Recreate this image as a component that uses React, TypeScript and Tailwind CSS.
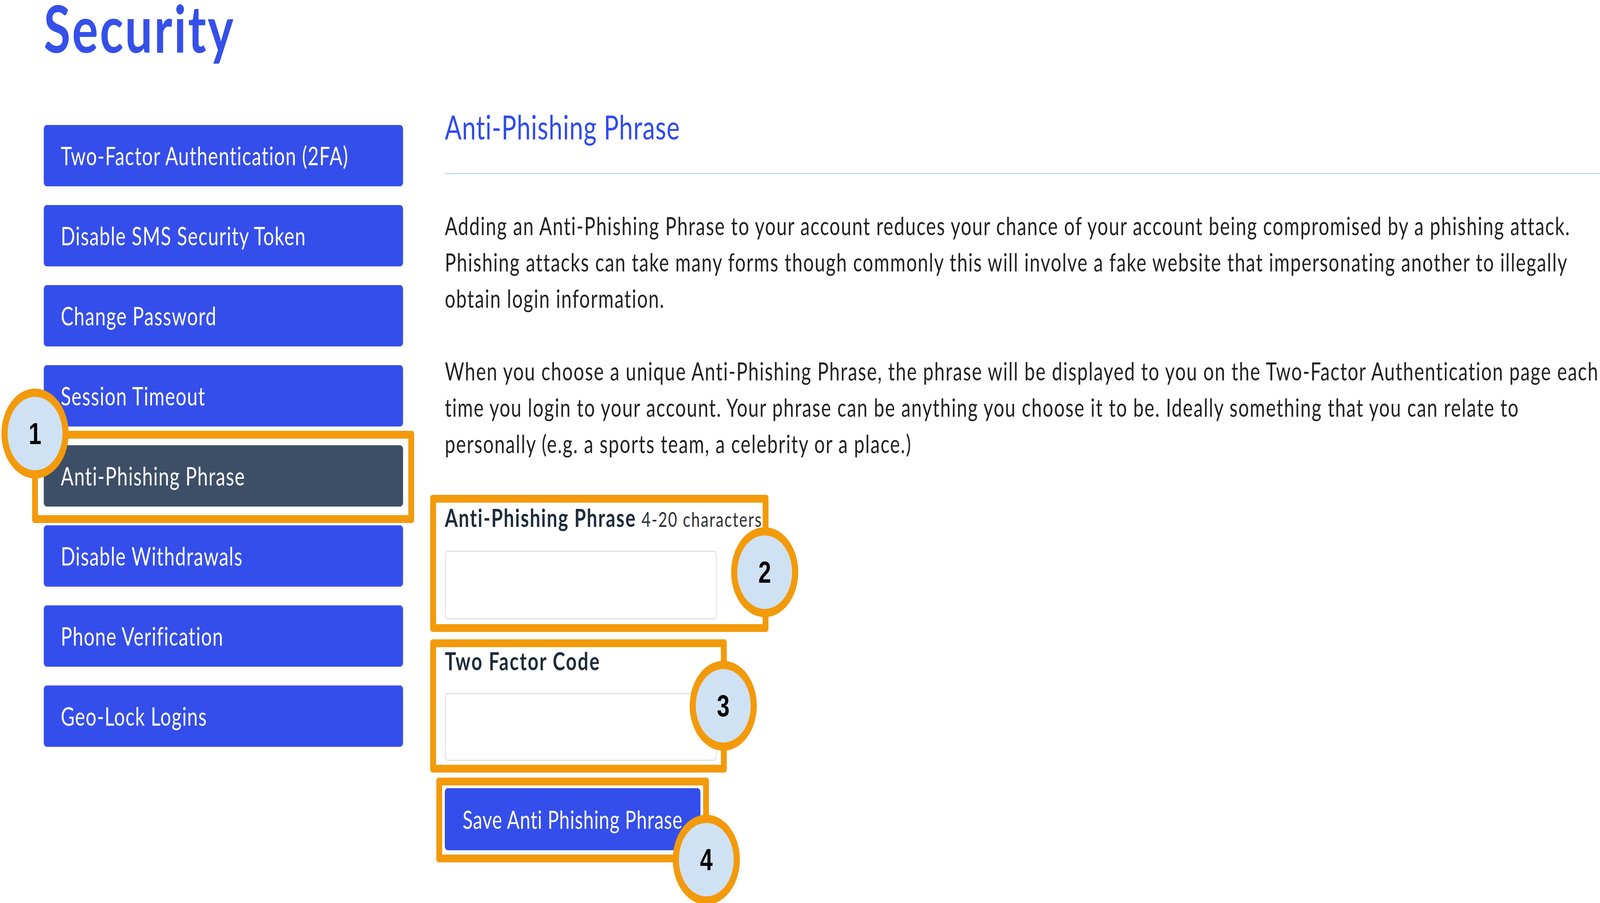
import React, { useEffect, useState } from 'react';

const navItems = [
  'Two-Factor Authentication (2FA)',
  'Disable SMS Security Token',
  'Change Password',
  'Session Timeout',
  'Anti-Phishing Phrase',
  'Disable Withdrawals',
  'Phone Verification',
  'Geo-Lock Logins',
];

const PAGE_W = 5482;

// numbered callout used by the annotation layer
function Marker({ n, className }: { n: number; className: string }) {
  return (
    <div
      className={`absolute z-20 flex h-[230px] w-[230px] items-center justify-center rounded-full border-[21px] border-[#f39a0b] bg-[#cfe2f3] font-['Liberation_Sans',Arial,sans-serif] text-[78px] font-bold text-black ${className}`}
    >
      {n}
    </div>
  );
}

export default function App() {
  const active = 'Anti-Phishing Phrase';
  // the frame is laid out at 5482px; fit it to the window width if that is narrower
  const [sx, setSx] = useState(() => Math.min(1, window.innerWidth / PAGE_W));

  useEffect(() => {
    const onResize = () => setSx(Math.min(1, window.innerWidth / PAGE_W));
    window.addEventListener('resize', onResize);
    return () => window.removeEventListener('resize', onResize);
  }, []);

  return (
    <div className="h-[2312px] w-full overflow-hidden bg-white">
      <div
        className="relative h-[2312px] w-[5482px] origin-top-left overflow-hidden bg-white font-['Lato',sans-serif]"
        style={{ transform: `scaleX(${sx})` }}
      >
        <h1 className="ml-[150px] text-[167px] leading-[142px] font-bold tracking-[0.034em] text-[#3550e8]">Security</h1>

        <div className="mt-[132px] flex">
          {/* Left nav */}
          <div className="ml-[150px] flex w-[1231px] shrink-0 flex-col gap-[48px] pt-[46px]">
            {navItems.map((item) => (
              <div key={item} className="relative">
                <button
                  className={`flex h-[157px] w-full items-center rounded-[10px] pl-[58px] text-left text-[65px] tracking-[0.03em] text-white ${
                    item === active ? 'bg-[#3d4f67]' : 'bg-[#344eeb]'
                  }`}
                >
                  {item}
                </button>
                {item === active && (
                  <>
                    <div className="pointer-events-none absolute -top-[37px] -bottom-[42px] -left-[40px] -right-[38px] rounded-[8px] border-[20px] border-[#f39a0b]" />
                    <Marker n={1} className="-left-[145px] -top-[145px]" />
                  </>
                )}
              </div>
            ))}
          </div>

          {/* Content */}
          <div className="ml-[143px] min-w-0 flex-1">
            <div className="border-b-[3px] border-[#c6dcf7] pb-[69px]">
              <h2 className="text-[85px] leading-[100px] tracking-[0.018em] text-[#2f4af0]">Anti-Phishing Phrase</h2>
            </div>

            <div className="mt-[85px] whitespace-nowrap text-[64px] leading-[93px] tracking-[0.042em] text-[#222222]">
              <p>
                Adding an Anti-Phishing Phrase to your account reduces your chance of your account being compromised by a phishing attack.
                <br />
                Phishing attacks can take many forms though commonly this will involve a fake website that impersonating another to illegally
                <br />
                obtain login information.
              </p>
              <p className="mt-[93px]">
                When you choose a unique Anti-Phishing Phrase, the phrase will be displayed to you on the Two-Factor Authentication page each
                <br />
                time you login to your account. Your phrase can be anything you choose it to be. Ideally something that you can relate to
                <br />
                personally (e.g. a sports team, a celebrity or a place.)
              </p>
            </div>

            {/* Phrase field */}
            <div className="relative mt-[103px] w-[932px]">
              <label className="block whitespace-nowrap text-[64px] leading-[80px] font-bold tracking-[0.047em] text-[#1e2b3a]">
                Anti-Phishing Phrase{' '}
                <span className="text-[53px] font-normal tracking-[0.06em] text-[#2b2f33]">4-20 characters</span>
              </label>
              <input className="mt-[41px] block h-[176px] w-[932px] rounded-[10px] border-[3px] border-[#dde2e8] bg-white" />
              <div className="pointer-events-none absolute -top-[18px] -bottom-[32px] -left-[50px] w-[1159px] rounded-[8px] border-[20px] border-[#f39a0b]" />
              <Marker n={2} className="left-[981px] top-[65px]" />
            </div>

            {/* Two factor field */}
            <div className="relative mt-[66px] w-[932px]">
              <label className="block text-[64px] leading-[80px] font-bold tracking-[0.057em] text-[#1e2b3a]">Two Factor Code</label>
              <input className="mt-[42px] block h-[174px] w-[932px] rounded-[10px] border-[3px] border-[#dde2e8] bg-white" />
              <div className="pointer-events-none absolute -top-[15px] -bottom-[30px] -left-[50px] w-[1016px] rounded-[8px] border-[20px] border-[#f39a0b]" />
              <Marker n={3} className="left-[839px] top-[40px]" />
            </div>

            {/* Save */}
            <div className="relative mt-[70px] w-[876px]">
              <button className="h-[159px] w-[876px] rounded-[10px] bg-[#344eeb] text-[64px] tracking-[0.02em] text-white">
                Save Anti Phishing Phrase
              </button>
              <div className="pointer-events-none absolute -top-[27px] -bottom-[31px] -left-[29px] -right-[29px] rounded-[8px] border-[20px] border-[#f39a0b]" />
              <Marker n={4} className="left-[781px] top-[68px]" />
            </div>
          </div>
        </div>
      </div>
    </div>
  );
}
